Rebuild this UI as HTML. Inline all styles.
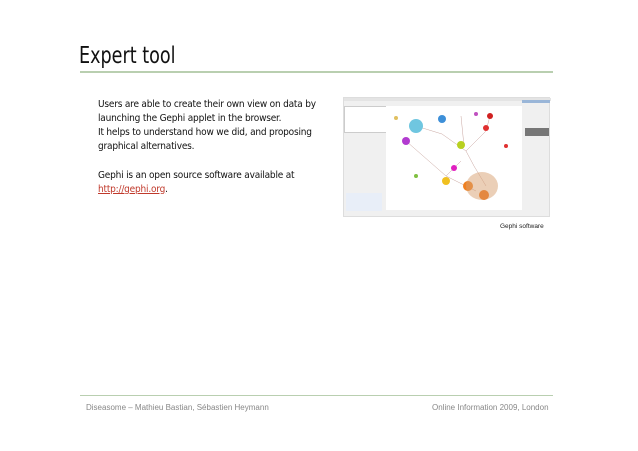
<!DOCTYPE html>
<html><head><style>
body{margin:0;width:638px;height:451px;background:#fff;position:relative;overflow:hidden;font-family:"Liberation Sans",sans-serif}
.a{position:absolute}
.t{font-family:"DejaVu Sans","Liberation Sans",sans-serif;}
.b{left:98px;font-size:10px;color:#111;line-height:14px;font-family:"DejaVu Sans Condensed","DejaVu Sans",sans-serif;letter-spacing:-0.2px}
</style></head><body>
<div class="a t" style="left:79px;top:43px;font-size:23px;color:#111;font-family:'DejaVu Sans Condensed','DejaVu Sans',sans-serif;transform:scaleX(0.85);transform-origin:0 0">Expert tool</div>
<div class="a" style="left:80px;top:71px;width:473px;height:2px;background:#b9cfb0"></div>
<div class="a b" style="top:98px">Users are able to create their own view on data by<br>launching the Gephi applet in the browser.</div>
<div class="a b" style="top:126px">It helps to understand how we did, and proposing<br>graphical alternatives.</div>
<div class="a b" style="top:169px">Gephi is an open source software available at<br><span style="color:#c0392b;text-decoration:underline">http://gephi.org</span>.</div>

<div class="a" style="left:343px;top:97px;width:207px;height:120px;background:#f0f0f0;border:1px solid #ddd;box-sizing:border-box">
 <div class="a" style="left:0;top:0;width:207px;height:3px;background:#e4e4e4"></div>
 <div class="a" style="left:0;top:8px;width:42px;height:25px;background:#fff;border:1px solid #ccc"></div>
 <div class="a" style="left:2px;top:95px;width:36px;height:18px;background:#e8eef8"></div>
 <div class="a" style="left:42px;top:8px;width:136px;height:104px;background:#fff"></div>
 <div class="a" style="left:178px;top:2px;width:28px;height:3px;background:#9ab6d8"></div>
 <div class="a" style="left:181px;top:30px;width:24px;height:8px;background:#777"></div>
 <svg class="a" style="left:42px;top:8px" width="136" height="104">
  <g stroke="#c9a6a0" stroke-width=".5" fill="none">
   <path d="M30 20 L56 28 L80 45 L88 60 L100 80 M20 35 L60 70 L90 85 M80 45 L100 25 L104 10 M60 70 L75 55 M75 10 L78 40"/>
  </g>
  <circle cx="30" cy="20" r="7" fill="#6fc6e0"/>
  <circle cx="56" cy="13" r="4" fill="#3d8fd8"/>
  <circle cx="20" cy="35" r="4" fill="#b23bd0"/>
  <circle cx="75" cy="39" r="4" fill="#b8d020"/>
  <circle cx="68" cy="62" r="3" fill="#e020c0"/>
  <circle cx="60" cy="75" r="4" fill="#f0c020"/>
  <circle cx="82" cy="80" r="5" fill="#f08020"/>
  <circle cx="98" cy="89" r="5" fill="#f07010"/>
  <circle cx="100" cy="22" r="3" fill="#e03030"/>
  <circle cx="104" cy="10" r="3" fill="#d02020"/>
  <circle cx="90" cy="8" r="2" fill="#c050c0"/>
  <circle cx="120" cy="40" r="2" fill="#e03030"/>
  <ellipse cx="96" cy="80" rx="16" ry="14" fill="#d8a070" opacity=".5"/>
  <circle cx="10" cy="12" r="2" fill="#e0c060"/>
  <circle cx="30" cy="70" r="2" fill="#80c040"/>
 </svg>
</div>
<div class="a" style="left:500px;top:223px;font-size:6.5px;color:#222">Gephi software</div>

<div class="a" style="left:80px;top:395px;width:473px;height:1px;background:#b9cfb0"></div>
<div class="a" style="left:86px;top:403px;font-size:8px;color:#888">Diseasome – Mathieu Bastian, Sébastien Heymann</div>
<div class="a" style="left:432px;top:403px;font-size:8px;color:#888">Online Information 2009, London</div>
</body></html>
